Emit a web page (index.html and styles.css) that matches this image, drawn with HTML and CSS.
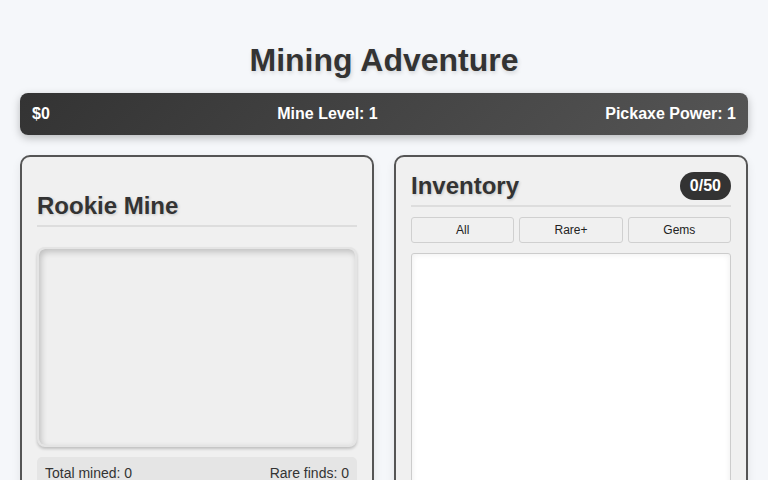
FILE: index.html
```html
<!DOCTYPE html>
<html lang="en">
<head>
<meta charset="utf-8">
<title>Mining Adventure</title>
<link rel="stylesheet" href="styles.css">
</head>
<body>
<h1 class="title">Mining Adventure</h1>
<div class="stats-bar">
  <span>$0</span>
  <span>Mine Level: 1</span>
  <span>Pickaxe Power: 1</span>
</div>
<div class="panels">
  <section class="panel">
    <h2 class="panel-heading mine-heading">Rookie Mine</h2>
    <div class="mine-area"></div>
    <div class="mine-stats">
      <span>Total mined: 0</span>
      <span>Rare finds: 0</span>
    </div>
  </section>
  <section class="panel">
    <div class="inv-header">
      <h2 class="panel-heading">Inventory</h2>
      <span class="badge">0/50</span>
    </div>
    <div class="filters">
      <button class="filter">All</button>
      <button class="filter">Rare+</button>
      <button class="filter">Gems</button>
    </div>
    <div class="inv-grid"></div>
  </section>
</div>
</body>
</html>
```
FILE: styles.css
```css
* { box-sizing: border-box; }
body {
  margin: 0;
  padding: 20px;
  background: #f5f7fa;
  font-family: "Liberation Sans", Arial, sans-serif;
  color: #333;
}
.title {
  margin: 22px 0 14px;
  text-align: center;
  font-size: 32px;
  line-height: 37px;
  font-weight: bold;
  color: #333;
  text-shadow: 1px 2px 4px rgba(0,0,0,0.15);
}
.stats-bar {
  display: flex;
  justify-content: space-between;
  padding: 12px;
  border-radius: 8px;
  background: linear-gradient(135deg, #333, #555);
  color: #fff;
  font-weight: bold;
  font-size: 16px;
  line-height: 18px;
  box-shadow: 0 3px 8px rgba(0,0,0,0.25);
  margin-bottom: 20px;
}
.panels {
  display: grid;
  grid-template-columns: 1fr 1fr;
  gap: 20px;
}
.panel {
  background: #f0f0f0;
  border: 2px solid #555;
  border-radius: 10px;
  padding: 15px;
  height: 400px;
  box-shadow: 0 4px 10px rgba(0,0,0,0.08);
}
.panel-heading {
  margin: 0;
  font-size: 24px;
  line-height: 28px;
  font-weight: bold;
  color: #333;
  text-shadow: 1px 1px 3px rgba(0,0,0,0.18);
}
.mine-heading {
  margin-top: 20px;
  padding-bottom: 5px;
  border-bottom: 2px solid #ddd;
}
.mine-area {
  margin-top: 20px;
  height: 200px;
  border-radius: 8px;
  border: 2px solid #e4e4e4;
  background: #efefef;
  box-shadow: inset 2px 3px 6px rgba(0,0,0,0.2), 0 2px 3px rgba(0,0,0,0.2);
}
.mine-stats {
  margin-top: 10px;
  display: flex;
  justify-content: space-between;
  padding: 8px;
  background: #e5e5e5;
  border-radius: 5px;
  font-size: 14px;
  line-height: 16px;
}
.inv-header {
  display: flex;
  justify-content: space-between;
  align-items: center;
  padding-bottom: 5px;
  border-bottom: 2px solid #ddd;
}
.badge {
  background: #333;
  color: #fff;
  font-weight: bold;
  font-size: 16px;
  line-height: 20px;
  padding: 4px 10px;
  border-radius: 14px;
}
.filters {
  display: flex;
  gap: 5px;
  margin-top: 10px;
}
.filter {
  flex: 1;
  height: 26px;
  font-family: "Liberation Sans", Arial, sans-serif;
  font-size: 12px;
  color: #222;
  background: #f0f0f0;
  border: 1px solid #d0d0d0;
  border-radius: 3px;
  padding: 0;
}
.inv-grid {
  margin-top: 10px;
  height: 300px;
  background: #fff;
  border: 1px solid #ccc;
  border-radius: 3px;
  box-shadow: inset 0 0 6px rgba(0,0,0,0.08);
}
```
